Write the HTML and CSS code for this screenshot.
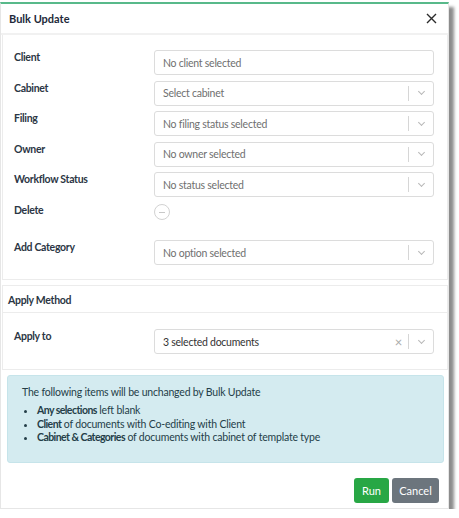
FILE: index.html
```html
<!DOCTYPE html>
<html lang="en">
<head>
  <meta charset="UTF-8">
  <title>Bulk Update</title>
  <link rel="stylesheet" href="styles.css">
</head>
<body>
  <div class="modal">
    <div class="modal-header">
      <h3>Bulk Update</h3>
      <button class="close" type="button" aria-label="Close">
        <svg width="11" height="11" viewBox="0 0 11 11"><path d="M1 1L10 10M10 1L1 10" stroke="#2b2b2b" stroke-width="1.4" fill="none"/></svg>
      </button>
    </div>

    <div class="card">
      <div class="card-body">
        <div class="field-row">
          <label>Client</label>
          <div class="select plain"><span class="placeholder">No client selected</span></div>
        </div>
        <div class="field-row">
          <label>Cabinet</label>
          <div class="select"><span class="placeholder">Select cabinet</span><span class="sep"></span><span class="chevron"></span></div>
        </div>
        <div class="field-row">
          <label>Filing</label>
          <div class="select"><span class="placeholder">No filing status selected</span><span class="sep"></span><span class="chevron"></span></div>
        </div>
        <div class="field-row">
          <label>Owner</label>
          <div class="select"><span class="placeholder">No owner selected</span><span class="sep"></span><span class="chevron"></span></div>
        </div>
        <div class="field-row">
          <label>Workflow Status</label>
          <div class="select"><span class="placeholder">No status selected</span><span class="sep"></span><span class="chevron"></span></div>
        </div>
        <div class="field-row delete-row">
          <label>Delete</label>
          <div><span class="toggle-circle"></span></div>
        </div>
        <div class="field-row">
          <label>Add Category</label>
          <div class="select"><span class="placeholder">No option selected</span><span class="sep"></span><span class="chevron"></span></div>
        </div>
      </div>
    </div>

    <div class="card card-method">
      <div class="card-header">Apply Method</div>
      <div class="card-body method-body">
        <div class="field-row">
          <label>Apply to</label>
          <div class="select"><span class="value">3 selected documents</span><span class="clear">&times;</span><span class="sep"></span><span class="chevron"></span></div>
        </div>
      </div>
    </div>

    <div class="alert-info">
      <p>The following items will be unchanged by Bulk Update</p>
      <ul>
        <li><strong>Any selections</strong> left blank</li>
        <li><strong>Client</strong> of documents with Co-editing with Client</li>
        <li><strong>Cabinet &amp; Categories</strong> of documents with cabinet of template type</li>
      </ul>
    </div>

    <div class="modal-footer">
      <button class="btn btn-run" type="button">Run</button>
      <button class="btn btn-cancel" type="button">Cancel</button>
    </div>
  </div>
</body>
</html>
```

FILE: styles.css
```css
:root {
  --text-color: #2b3644;
  --border-color: #e1e1e1;
  --green: #28a745;
}

body {
  margin: 0;
  background: #fff;
  font-family: Lato, "Open Sans", sans-serif;
  font-size: 10.5px;
  letter-spacing: -0.25px;
  color: var(--text-color);
}

.modal {
  width: 447px;
  margin-top: 2px;
  background: #fff;
  border: 1px solid #e6e6e6;
  border-top: 2px solid #58b98a;
  box-shadow: 5px 5px 3px rgba(0, 0, 0, 0.45);
}

.modal-header {
  height: 29px;
  display: flex;
  align-items: center;
  justify-content: space-between;
  padding: 0 11px 0 8px;
  border-bottom: 2px solid #f1f1f1;
}

.modal-header h3 {
  margin: 0;
  font-size: 11px;
  font-weight: 700;
  letter-spacing: 0;
  color: #1e2a3a;
}

.close {
  border: none;
  background: none;
  padding: 0;
  display: flex;
  cursor: pointer;
}

.card {
  margin: 0 0 0 1px;
  border: 1px solid #ececec;
  border-top: none;
}

.card-body {
  padding: 15px 13px 14px 11px;
  display: flex;
  flex-direction: column;
  gap: 5.5px;
}

.field-row {
  display: grid;
  grid-template-columns: 140px 1fr;
}

.field-row label {
  line-height: 14px;
  font-weight: 700;
  letter-spacing: -0.3px;
}

.select {
  height: 25px;
  box-sizing: border-box;
  border: 1px solid #dcdcdc;
  border-radius: 3px;
  display: flex;
  align-items: center;
  padding-left: 8px;
}

.placeholder {
  color: #6f6f6f;
  flex: 1;
}

.value {
  color: #333;
  flex: 1;
}

.clear {
  color: #aaa;
  font-size: 13px;
  margin-right: 6px;
}

.sep {
  width: 1px;
  height: 15px;
  background: #d6d6d6;
}

.chevron {
  width: 24px;
  height: 100%;
  display: flex;
  align-items: center;
  justify-content: center;
}

.chevron::before {
  content: "";
  width: 4px;
  height: 4px;
  border-right: 1px solid #b8b8b8;
  border-bottom: 1px solid #b8b8b8;
  transform: rotate(45deg);
  margin-top: -3px;
}

.delete-row {
  height: 32px;
}

.toggle-circle {
  display: inline-flex;
  align-items: center;
  justify-content: center;
  width: 14px;
  height: 14px;
  border: 1px solid #d2d2d2;
  border-radius: 50%;
}

.toggle-circle::before {
  content: "";
  width: 6px;
  height: 1px;
  background: #c8c8c8;
}

.card-method {
  margin-top: 5px;
  border-top: 1px solid #ececec;
}

.card-header {
  height: 25px;
  display: flex;
  align-items: center;
  padding: 1px 0 0 5px;
  font-weight: 700;
  letter-spacing: -0.3px;
  border-bottom: 1px solid #ececec;
}

.method-body {
  padding-top: 16px;
  padding-bottom: 15px;
}

.alert-info {
  margin: 5px 4px 0 6px;
  background: #d4ebf0;
  border: 1px solid #c6e4ea;
  border-radius: 3px;
  padding: 9px 14px 17px;
  color: #243e48;
  letter-spacing: -0.2px;
}

.alert-info p {
  margin: 0 0 5px;
  line-height: 14px;
}

.alert-info ul {
  margin: 0;
  padding-left: 15px;
}

.alert-info li {
  line-height: 13.5px;
}

.alert-info strong {
  font-weight: 700;
  letter-spacing: -0.55px;
}

.modal-footer {
  display: flex;
  justify-content: flex-end;
  gap: 3px;
  padding: 15px 9px 5px;
}

.btn {
  height: 25px;
  border: none;
  border-radius: 3px;
  color: #fff;
  font-family: inherit;
  font-size: 11px;
  letter-spacing: 0;
  padding: 0 7px;
  cursor: pointer;
}

.btn-run {
  background: var(--green);
  width: 35px;
}

.btn-cancel {
  background: #6c757d;
  width: 47px;
}
```
